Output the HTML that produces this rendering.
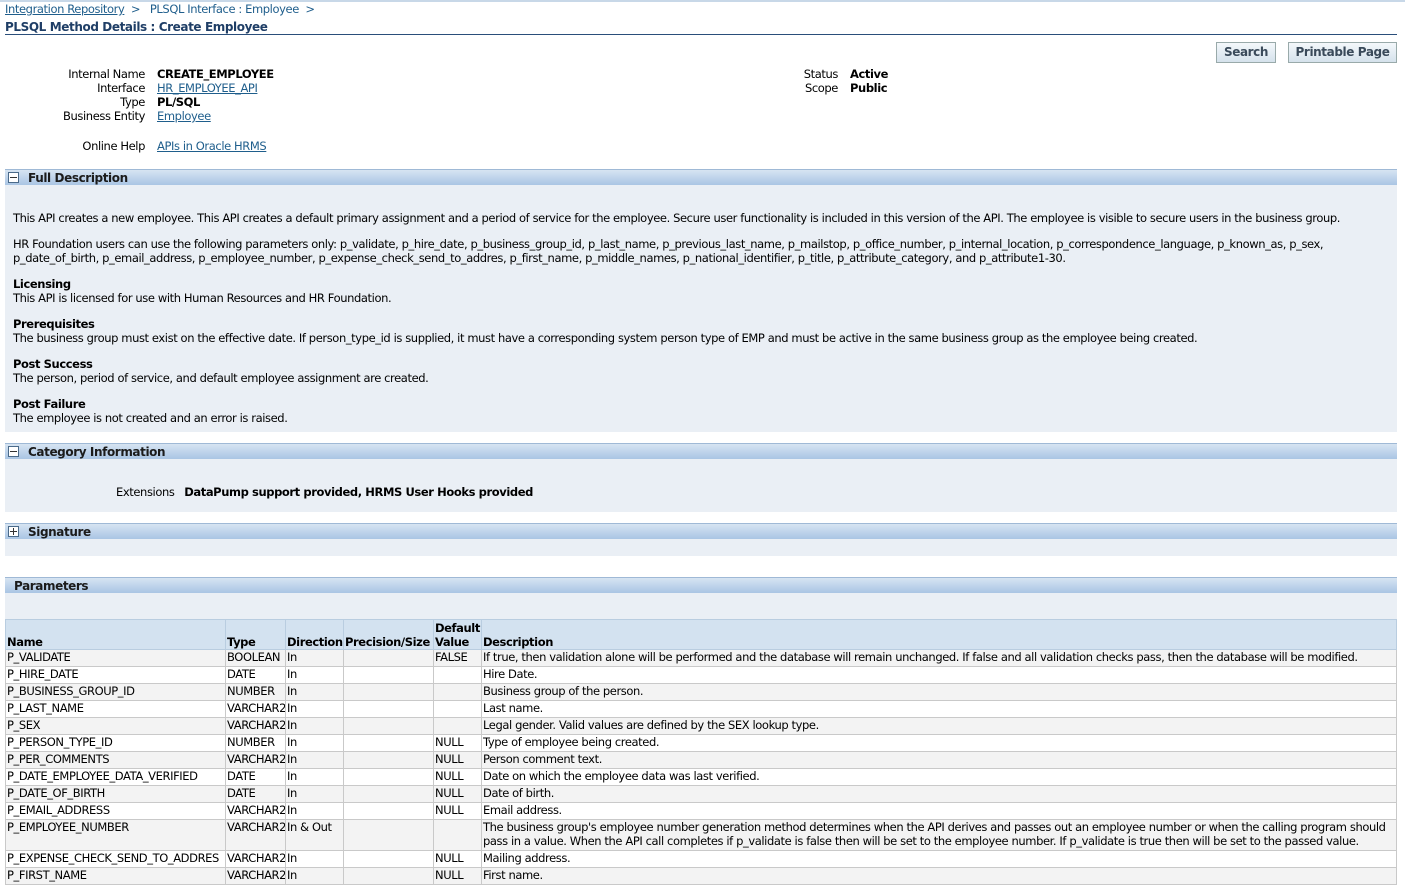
<!DOCTYPE html>
<html><head><meta charset="utf-8"><style>
body{margin:0;width:1405px;height:873px;overflow:hidden;background:#fff;font-family:"DejaVu Sans","Liberation Sans",sans-serif;font-size:11.5px;color:#000;position:relative;letter-spacing:-0.4px}
a{color:#1f5e8c}
.abs{position:absolute;white-space:nowrap}
.hdr{position:absolute;left:5px;width:1392px;height:15px;background:linear-gradient(#d6e4f2,#a9c5e4);border-top:1px solid #9fb9d6;font-weight:bold;color:#1b1b1b;font-size:12px;line-height:16px}
.box{position:absolute;left:5px;width:1392px;background:#eaeff5}
.pm{display:inline-block;width:9px;height:9px;border:1px solid #4a6a8a;background:#fff;margin:0 9px 0 3px;vertical-align:-1px;position:relative}
.b{font-weight:bold}
table{position:absolute;left:5px;top:619px;width:1392px;border-collapse:collapse;font-size:11.5px;table-layout:fixed}
td,th{border:1px solid #c9c9c9;padding:0 1px;height:16px;line-height:15px;text-align:left;vertical-align:top;white-space:nowrap;overflow:hidden}
th{background:#d3e2f0;font-weight:bold;vertical-align:bottom;height:29px;border-color:#b9cde0;line-height:14px}
tr:nth-child(even) td{background:#f3f3f3}
.btn{position:absolute;top:42px;height:19px;border:1px solid #9aa;background:linear-gradient(#f4f8fb,#d5e2ec);font-weight:bold;color:#3a4a5a;font-size:12px;line-height:19px;text-align:center}
</style></head><body>
<div style="position:absolute;left:0;top:0;width:1405px;height:2px;background:#c8d8e8"></div>
<div class="abs" style="left:5px;top:2px;color:#1f5e8c"><a href="#">Integration Repository</a> &nbsp;&gt; &nbsp;&nbsp;PLSQL Interface : Employee &nbsp;&gt;</div>
<div class="abs b" style="left:5px;top:20px;color:#1f3e66;font-size:12px">PLSQL Method Details : Create Employee</div>
<div style="position:absolute;left:5px;top:34px;width:1392px;height:1px;background:#2a4e7a"></div>
<div class="btn" style="left:1216px;width:58px">Search</div>
<div class="btn" style="left:1288px;width:107px">Printable Page</div>

<div class="abs" style="left:0;width:145px;text-align:right;top:67px;line-height:14px">Internal Name<br>Interface<br>Type<br>Business Entity</div>
<div class="abs" style="left:0;width:145px;text-align:right;top:139px">Online Help</div>
<div class="abs" style="left:157px;top:67px;line-height:14px"><b>CREATE_EMPLOYEE</b><br><a href="#">HR_EMPLOYEE_API</a><br><b>PL/SQL</b><br><a href="#">Employee</a></div>
<div class="abs" style="left:157px;top:139px"><a href="#">APIs in Oracle HRMS</a></div>
<div class="abs" style="left:700px;width:138px;text-align:right;top:67px;line-height:14px">Status<br>Scope</div>
<div class="abs b" style="left:850px;top:67px;line-height:14px">Active<br>Public</div>

<div class="hdr" style="top:169px"><span class="pm"><span style="position:absolute;left:1px;top:4px;width:7px;height:1px;background:#333"></span></span>Full Description</div>
<div class="box" style="top:185px;height:247px"></div>
<div class="abs" style="left:13px;top:211px">This API creates a new employee. This API creates a default primary assignment and a period of service for the employee. Secure user functionality is included in this version of the API. The employee is visible to secure users in the business group.</div>
<div class="abs" style="left:13px;top:237px;line-height:14px">HR Foundation users can use the following parameters only: p_validate, p_hire_date, p_business_group_id, p_last_name, p_previous_last_name, p_mailstop, p_office_number, p_internal_location, p_correspondence_language, p_known_as, p_sex,<br>p_date_of_birth, p_email_address, p_employee_number, p_expense_check_send_to_addres, p_first_name, p_middle_names, p_national_identifier, p_title, p_attribute_category, and p_attribute1-30.</div>
<div class="abs" style="left:13px;top:277px;line-height:14px"><b>Licensing</b><br>This API is licensed for use with Human Resources and HR Foundation.</div>
<div class="abs" style="left:13px;top:317px;line-height:14px"><b>Prerequisites</b><br>The business group must exist on the effective date. If person_type_id is supplied, it must have a corresponding system person type of EMP and must be active in the same business group as the employee being created.</div>
<div class="abs" style="left:13px;top:357px;line-height:14px"><b>Post Success</b><br>The person, period of service, and default employee assignment are created.</div>
<div class="abs" style="left:13px;top:397px;line-height:14px"><b>Post Failure</b><br>The employee is not created and an error is raised.</div>

<div class="hdr" style="top:443px"><span class="pm"><span style="position:absolute;left:1px;top:4px;width:7px;height:1px;background:#333"></span></span>Category Information</div>
<div class="box" style="top:459px;height:53px"></div>
<div class="abs" style="left:116px;top:485px">Extensions &nbsp;&nbsp;<b>DataPump support provided, HRMS User Hooks provided</b></div>

<div class="hdr" style="top:523px"><span class="pm"><span style="position:absolute;left:1px;top:4px;width:7px;height:1px;background:#333"></span><span style="position:absolute;left:4px;top:1px;width:1px;height:7px;background:#333"></span></span>Signature</div>
<div class="box" style="top:539px;height:17px"></div>

<div class="hdr" style="top:577px;padding-left:9px;width:1383px">Parameters</div>
<div class="box" style="top:593px;height:26px"></div>

<table>
<colgroup><col style="width:220px"><col style="width:60px"><col style="width:58px"><col style="width:90px"><col style="width:48px"><col></colgroup>
<tr><th>Name</th><th>Type</th><th>Direction</th><th>Precision/Size</th><th>Default<br>Value</th><th>Description</th></tr>
<tr><td>P_VALIDATE</td><td>BOOLEAN</td><td>In</td><td></td><td>FALSE</td><td>If true, then validation alone will be performed and the database will remain unchanged. If false and all validation checks pass, then the database will be modified.</td></tr>
<tr><td>P_HIRE_DATE</td><td>DATE</td><td>In</td><td></td><td></td><td>Hire Date.</td></tr>
<tr><td>P_BUSINESS_GROUP_ID</td><td>NUMBER</td><td>In</td><td></td><td></td><td>Business group of the person.</td></tr>
<tr><td>P_LAST_NAME</td><td>VARCHAR2</td><td>In</td><td></td><td></td><td>Last name.</td></tr>
<tr><td>P_SEX</td><td>VARCHAR2</td><td>In</td><td></td><td></td><td>Legal gender. Valid values are defined by the SEX lookup type.</td></tr>
<tr><td>P_PERSON_TYPE_ID</td><td>NUMBER</td><td>In</td><td></td><td>NULL</td><td>Type of employee being created.</td></tr>
<tr><td>P_PER_COMMENTS</td><td>VARCHAR2</td><td>In</td><td></td><td>NULL</td><td>Person comment text.</td></tr>
<tr><td>P_DATE_EMPLOYEE_DATA_VERIFIED</td><td>DATE</td><td>In</td><td></td><td>NULL</td><td>Date on which the employee data was last verified.</td></tr>
<tr><td>P_DATE_OF_BIRTH</td><td>DATE</td><td>In</td><td></td><td>NULL</td><td>Date of birth.</td></tr>
<tr><td>P_EMAIL_ADDRESS</td><td>VARCHAR2</td><td>In</td><td></td><td>NULL</td><td>Email address.</td></tr>
<tr><td style="height:30px;line-height:14px">P_EMPLOYEE_NUMBER</td><td>VARCHAR2</td><td>In &amp; Out</td><td></td><td></td><td style="line-height:14px">The business group's employee number generation method determines when the API derives and passes out an employee number or when the calling program should<br>pass in a value. When the API call completes if p_validate is false then will be set to the employee number. If p_validate is true then will be set to the passed value.</td></tr>
<tr><td>P_EXPENSE_CHECK_SEND_TO_ADDRES</td><td>VARCHAR2</td><td>In</td><td></td><td>NULL</td><td>Mailing address.</td></tr>
<tr><td>P_FIRST_NAME</td><td>VARCHAR2</td><td>In</td><td></td><td>NULL</td><td>First name.</td></tr>
</table>
</body></html>
